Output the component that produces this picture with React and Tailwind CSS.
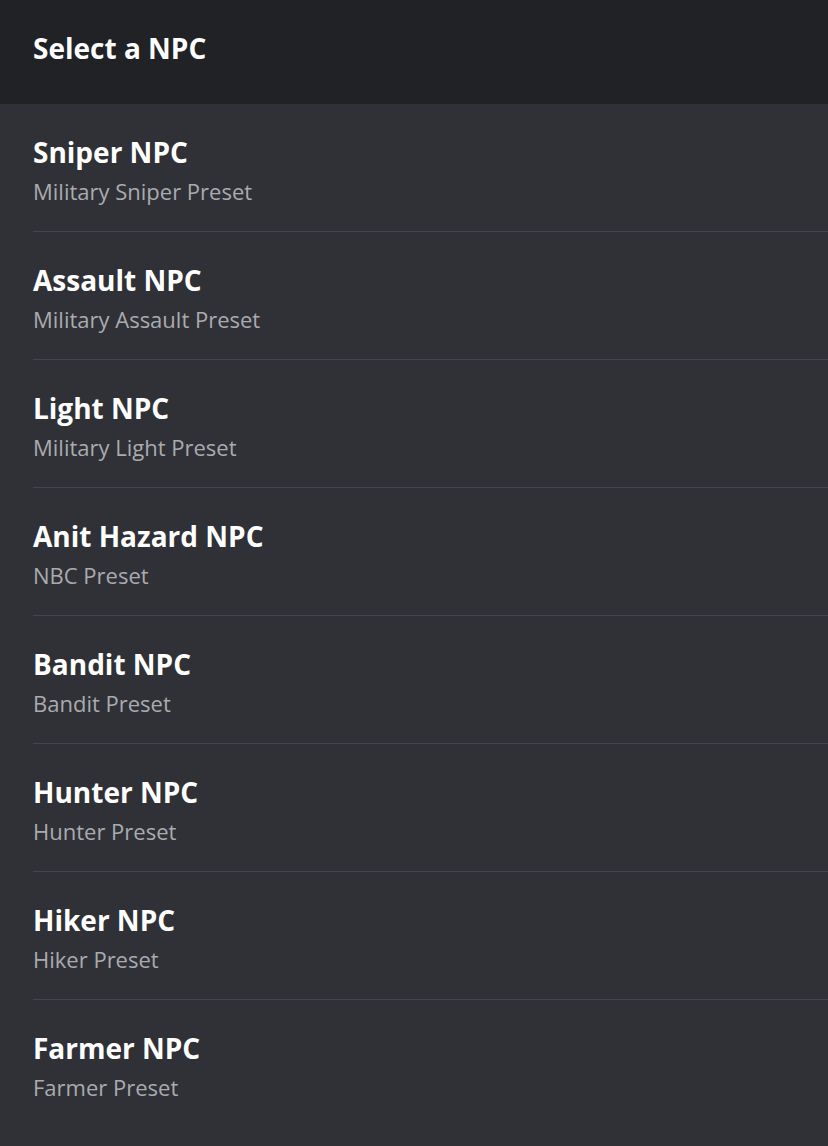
const npcs = [
   { name: "Sniper NPC", preset: "Military Sniper Preset" },
   { name: "Assault NPC", preset: "Military Assault Preset" },
   { name: "Light NPC", preset: "Military Light Preset" },
   { name: "Anit Hazard NPC", preset: "NBC Preset" },
   { name: "Bandit NPC", preset: "Bandit Preset" },
   { name: "Hunter NPC", preset: "Hunter Preset" },
   { name: "Hiker NPC", preset: "Hiker Preset" },
   { name: "Farmer NPC", preset: "Farmer Preset" },
];

export default function App() {
   return (
      <div className="min-h-[1146px] w-[828px] bg-[#2f3136] font-['Open_Sans',sans-serif]">
         {/* Header */}
         <div className="h-[104px] bg-[#202225] pl-[33px] pt-[31px]">
            <h1 className="text-[28px] leading-[34px] font-bold text-white">Select a NPC</h1>
         </div>

         {/* NPC list */}
         <ul className="pl-[33px]">
            {npcs.map((npc, i) => (
               <li
                  key={npc.name}
                  className={`h-[128px] pt-[31px] ${i < npcs.length - 1 ? "border-b border-[#42454b]" : ""}`}
               >
                  <p className="text-[28px] leading-[34px] font-bold text-white">{npc.name}</p>
                  <p className="mt-[8px] text-[22px] leading-[28px] text-[#a9abaf]">{npc.preset}</p>
               </li>
            ))}
         </ul>
      </div>
   );
}
